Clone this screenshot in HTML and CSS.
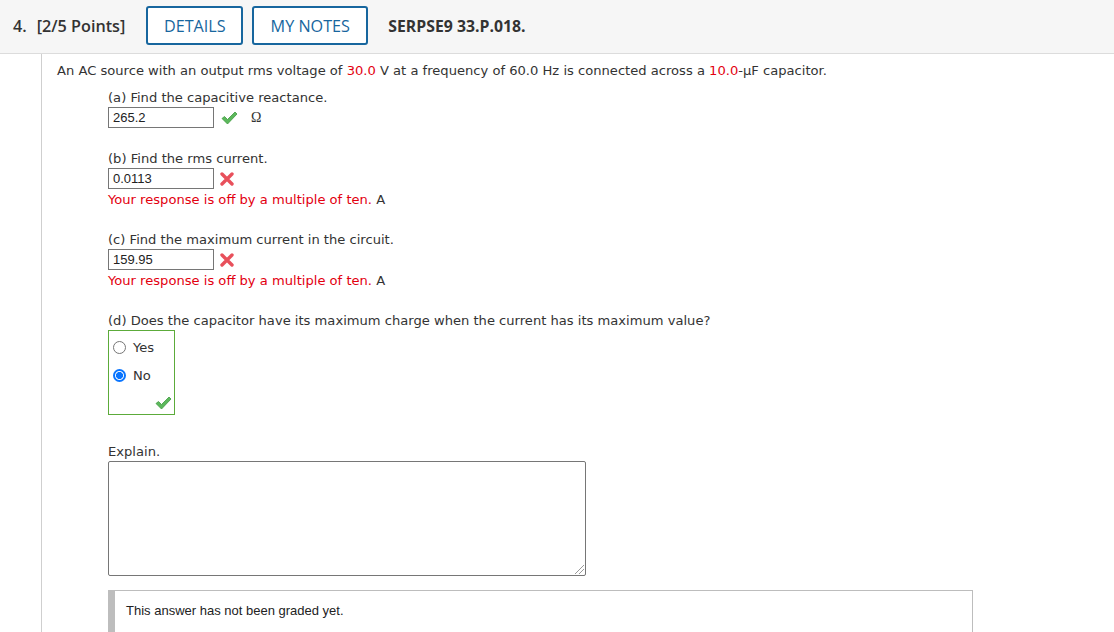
FILE: index.html
```html
<!DOCTYPE html>
<html>
<head>
<meta charset="utf-8">
<link rel="stylesheet" href="styles.css">
</head>
<body>
<div class="header">
  <span class="qnum">4.</span>
  <span class="points">[2/5 Points]</span>
  <button class="btn btn-details">DETAILS</button>
  <button class="btn btn-notes">MY NOTES</button>
  <span class="code">SERPSE9 33.P.018.</span>
</div>
<div class="main">
  <div class="content">
    <p class="stem">An AC source with an output rms voltage of <span class="red">30.0</span> V at a frequency of 60.0 Hz is connected across a <span class="red">10.0</span>-μF capacitor.</p>
    <div class="parts">
      <div class="part part-a">
        <div class="label">(a) Find the capacitive reactance.</div>
        <div class="answer-row">
          <span class="input">265.2</span>
          <svg class="check" width="17" height="14" viewBox="0 0 17 14"><path d="M1 7.5 L3.5 5.5 L6.5 8.5 L14 1 L16 3 L6.5 13 Z" fill="#5cb85c" stroke="#3f9a3f" stroke-width="0.8" stroke-linejoin="round"/></svg>
          <span class="omega">Ω</span>
        </div>
      </div>
      <div class="part part-err">
        <div class="label">(b) Find the rms current.</div>
        <div class="answer-row">
          <span class="input">0.0113</span>
          <svg class="cross" width="14" height="14" viewBox="0 0 14 14"><path d="M2 2 L12 12 M12 2 L2 12" stroke="#e8505b" stroke-width="3.4" stroke-linecap="round"/></svg>
        </div>
        <div class="error">Your response is off by a multiple of ten. <span class="unit-a">A</span></div>
      </div>
      <div class="part part-err">
        <div class="label">(c) Find the maximum current in the circuit.</div>
        <div class="answer-row">
          <span class="input">159.95</span>
          <svg class="cross" width="14" height="14" viewBox="0 0 14 14"><path d="M2 2 L12 12 M12 2 L2 12" stroke="#e8505b" stroke-width="3.4" stroke-linecap="round"/></svg>
        </div>
        <div class="error">Your response is off by a multiple of ten. <span class="unit-a">A</span></div>
      </div>
      <div class="part">
        <div class="label">(d) Does the capacitor have its maximum charge when the current has its maximum value?</div>
        <div class="mc">
          <div class="opt"><span class="radio"></span><span>Yes</span></div>
          <div class="opt"><span class="radio on"></span><span>No</span></div>
          <div class="mc-check">
            <svg width="17" height="14" viewBox="0 0 17 14"><path d="M1 7.5 L3.5 5.5 L6.5 8.5 L14 1 L16 3 L6.5 13 Z" fill="#5cb85c" stroke="#3f9a3f" stroke-width="0.8" stroke-linejoin="round"/></svg>
          </div>
        </div>
      </div>
      <div class="explain">
        <div class="label">Explain.</div>
        <div class="textarea"><span class="grip"></span></div>
      </div>
      <div class="graded">This answer has not been graded yet.</div>
    </div>
  </div>
</div>
</body>
</html>
```
FILE: styles.css
```css
html, body {
  margin: 0;
  padding: 0;
  background: #fff;
}
body {
  font-family: "DejaVu Sans", Verdana, sans-serif;
  color: #333;
  overflow: hidden;
  height: 632px;
}
.header {
  height: 54px;
  box-sizing: border-box;
  background: #f6f6f6;
  border-bottom: 1px solid #dcdcdc;
  display: flex;
  align-items: center;
  padding-left: 13px;
  padding-bottom: 2px;
  font-family: "Open Sans", sans-serif;
  font-weight: 600;
  font-size: 16.2px;
  color: #333;
}
.qnum {
  margin-right: 10px;
}
.points {
  margin-right: 21px;
}
.btn {
  font-family: "Open Sans", sans-serif;
  font-weight: 500;
  font-size: 16.2px;
  color: #17669e;
  background: #fff;
  border: 2px solid #17669e;
  border-radius: 3px;
  height: 39px;
  padding: 0;
  box-sizing: border-box;
}
.btn-details {
  width: 97px;
  margin-right: 9px;
}
.btn-notes {
  width: 116px;
  margin-right: 20px;
}
.code {
  font-weight: 700;
  font-size: 15.8px;
}
.main {
  margin-left: 41px;
  border-left: 1px solid #cfcfcf;
  height: 578px;
}
.content {
  padding-left: 15px;
  padding-top: 9px;
}
.stem {
  margin: 0;
  font-size: 13.1px;
  line-height: 16px;
}
.red {
  color: #e3000f;
}
.parts {
  padding-left: 51px;
  padding-top: 11px;
}
.part {
  font-size: 13.1px;
}
.part-a {
  margin-bottom: 23px;
}
.part-err {
  margin-bottom: 24px;
}
.label {
  line-height: 16px;
  height: 16px;
}
.answer-row {
  display: flex;
  align-items: center;
  margin-top: 1px;
  height: 21px;
}
.input {
  display: inline-block;
  box-sizing: border-box;
  width: 106px;
  height: 21px;
  border: 1px solid #767676;
  font-family: "Liberation Sans", Arial, sans-serif;
  font-size: 13px;
  line-height: 19px;
  padding-left: 4px;
  color: #222;
}
.check {
  margin-left: 7px;
}
.cross {
  margin-left: 6px;
}
.omega {
  font-family: "Liberation Serif", serif;
  font-size: 14px;
  margin-left: 13px;
  color: #333;
}
.error {
  color: #e3000f;
  margin-top: 3px;
  line-height: 16px;
}
.unit-a {
  color: #333;
}
.mc {
  width: 67px;
  height: 85px;
  box-sizing: border-box;
  border: 1px solid #5cab3a;
  margin-top: 1px;
  padding-top: 8px;
  padding-left: 4px;
  position: relative;
}
.opt {
  display: flex;
  align-items: center;
  height: 16px;
  margin-bottom: 12px;
  font-size: 13.1px;
}
.radio {
  width: 13px;
  height: 13px;
  box-sizing: border-box;
  border: 1px solid #767676;
  border-radius: 50%;
  margin-right: 7px;
  background: #fff;
}
.radio.on {
  border: 2px solid #0a75ff;
  background: radial-gradient(circle, #0a75ff 0 3.3px, #fff 3.8px);
}
.mc-check {
  position: absolute;
  right: 2px;
  bottom: 1px;
}
.explain {
  margin-top: 29px;
  font-size: 13.1px;
}
.textarea {
  margin-top: 1px;
  width: 478px;
  height: 115px;
  box-sizing: border-box;
  border: 1px solid #767676;
  border-radius: 2px;
  position: relative;
}
.grip {
  position: absolute;
  right: 1px;
  bottom: 1px;
  width: 9px;
  height: 9px;
  background: linear-gradient(135deg, transparent 0 45%, #999 45% 52%, transparent 52% 70%, #999 70% 77%, transparent 77%);
}
.graded {
  margin-top: 14px;
  width: 865px;
  box-sizing: border-box;
  border: 1px solid #bdbdbd;
  border-left: 7px solid #bdbdbd;
  height: 43px;
  padding: 12px 0 0 11px;
  font-family: "Liberation Sans", Arial, sans-serif;
  font-size: 13px;
  color: #222;
}
```
